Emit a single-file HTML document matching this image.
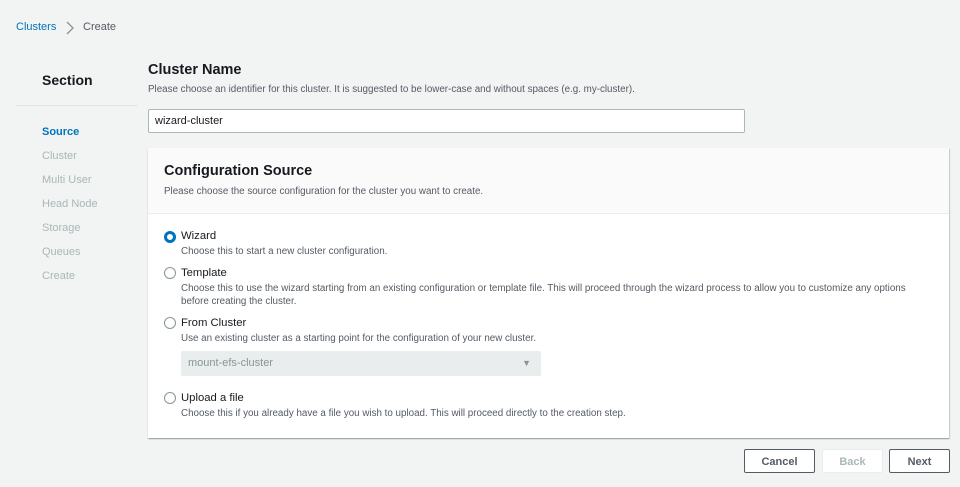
<!DOCTYPE html>
<html><head><style>
body{margin:0;width:960px;height:487px;background:#f2f3f3;font-family:"Liberation Sans",sans-serif;position:relative;overflow:hidden;color:#16191f}
.a{position:absolute;white-space:nowrap}
.nav{font-size:11px;color:#aab7b8}
.s{font-size:9.8px;color:#545b64}
.r{position:absolute;width:10px;height:10px;border:1px solid #879596;border-radius:50%;background:#fff;left:164px}
.lbl{font-size:11.3px;color:#16191f}
.btn{position:absolute;top:449px;height:24px;border:1px solid #545b64;border-radius:2px;background:#fff;font-size:11px;font-weight:bold;color:#545b64;text-align:center;line-height:24px;box-sizing:border-box}
</style></head><body>
<div class="a" style="left:16px;top:21px;font-size:11px;color:#0073bb">Clusters</div>
<svg class="a" style="left:64px;top:20px" width="12" height="16"><path d="M3 2 L9 8 L3 14" fill="none" stroke="#879596" stroke-width="1.3"/></svg>
<div class="a" style="left:83px;top:21px;font-size:11px;color:#545b64">Create</div>
<div class="a" style="left:42px;top:72px;font-size:14px;font-weight:bold">Section</div>
<div class="a" style="left:16px;top:105px;width:122px;height:1px;background:#e3e5e5"></div>
<div class="a nav" style="left:42px;top:126px;color:#0073bb;font-weight:bold">Source</div>
<div class="a nav" style="left:42px;top:150px">Cluster</div>
<div class="a nav" style="left:42px;top:174px">Multi User</div>
<div class="a nav" style="left:42px;top:198px">Head Node</div>
<div class="a nav" style="left:42px;top:222px">Storage</div>
<div class="a nav" style="left:42px;top:246px">Queues</div>
<div class="a nav" style="left:42px;top:270px">Create</div>
<div class="a" style="left:148px;top:62px;font-size:14.5px;font-weight:bold">Cluster Name</div>
<div class="a s" style="left:148px;top:84px">Please choose an identifier for this cluster. It is suggested to be lower-case and without spaces (e.g. my-cluster).</div>
<div class="a" style="left:148px;top:109px;width:597px;height:24px;box-sizing:border-box;border:1px solid #aab7b8;border-radius:2px;background:#fff;font-size:11px;line-height:22px;padding-left:6px">wizard-cluster</div>
<div class="a" style="left:148px;top:148px;width:801px;height:290px;background:#fff;box-shadow:0 1px 1px rgba(0,28,36,.3),1px 1px 1px rgba(0,28,36,.15)"></div>
<div class="a" style="left:148px;top:148px;width:801px;height:65px;background:#fafafa;border-bottom:1px solid #eaeded"></div>
<div class="a" style="left:164px;top:163px;font-size:14.5px;font-weight:bold">Configuration Source</div>
<div class="a s" style="left:164px;top:186px">Please choose the source configuration for the cluster you want to create.</div>
<div class="r" style="top:231px;border:3px solid #0073bb;width:6px;height:6px"></div>
<div class="a lbl" style="left:181px;top:230px">Wizard</div>
<div class="a s" style="left:181px;top:246px">Choose this to start a new cluster configuration.</div>
<div class="r" style="top:267px"></div>
<div class="a lbl" style="left:181px;top:267px">Template</div>
<div class="a s" style="left:181px;top:283px">Choose this to use the wizard starting from an existing configuration or template file. This will proceed through the wizard process to allow you to customize any options</div>
<div class="a s" style="left:181px;top:296px">before creating the cluster.</div>
<div class="r" style="top:317px"></div>
<div class="a lbl" style="left:181px;top:317px">From Cluster</div>
<div class="a s" style="left:181px;top:333px">Use an existing cluster as a starting point for the configuration of your new cluster.</div>
<div class="a" style="left:181px;top:351px;width:360px;height:25px;background:#eaeded;border-radius:2px;font-size:11px;color:#879596;line-height:25px;padding-left:7px;box-sizing:border-box">mount-efs-cluster<span style="position:absolute;right:10px;font-size:9px">▼</span></div>
<div class="r" style="top:392px"></div>
<div class="a lbl" style="left:181px;top:392px">Upload a file</div>
<div class="a s" style="left:181px;top:408px">Choose this if you already have a file you wish to upload. This will proceed directly to the creation step.</div>
<div class="btn" style="left:744px;width:71px">Cancel</div>
<div class="btn" style="left:822px;width:61px;border-color:#eaeded;color:#aab7b8">Back</div>
<div class="btn" style="left:889px;width:61px">Next</div>
</body></html>
